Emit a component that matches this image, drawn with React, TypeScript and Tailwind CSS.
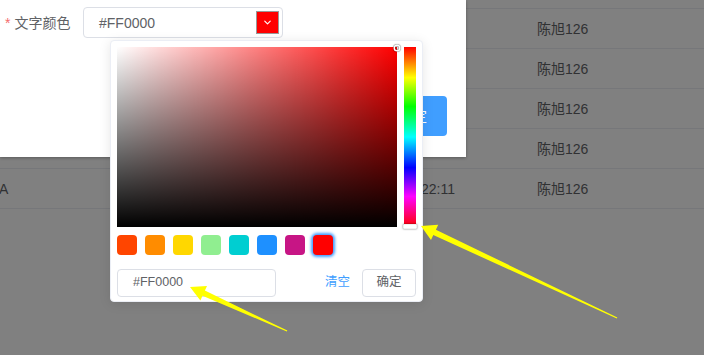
import { ChevronDown } from "lucide-react";

const rows = [0, 1, 2, 3, 4];
const swatches = ["#ff4500", "#ff8c00", "#ffd700", "#90ee90", "#00ced1", "#1e90ff", "#c71585", "#ff0000"];

function Arrows() {
  return (
    <svg className="pointer-events-none absolute left-0 top-0" width="704" height="355" viewBox="0 0 704 355">
      <polygon
        points="190,287 207,285.9 204.9,290.6 287.3,330.6 286.8,331.4 202.5,295.8 200.4,300.5"
        fill="#ffff00"
      />
      <polygon
        points="421,226 438.2,224.7 435.9,229.7 617.3,317.6 616.8,318.4 433.3,235.1 431,240.1"
        fill="#ffff00"
      />
    </svg>
  );
}

function ColorDropdown() {
  return (
    <div className="absolute left-[110px] top-[40px] h-[262px] w-[313px] rounded-[4px] border border-[#ebeef5] bg-white p-[6px] shadow-[0_2px_12px_0_rgba(0,0,0,0.1)]">
      <div className="flex">
        <div className="relative h-[180px] w-[280px] bg-[#ff0000]">
          <div className="absolute inset-0 bg-[linear-gradient(to_right,#fff,rgba(255,255,255,0))]" />
          <div className="absolute inset-0 bg-[linear-gradient(to_top,#000,rgba(0,0,0,0))]" />
          <div className="absolute right-[-2px] top-[-1px] size-[4px] rounded-full shadow-[0_0_0_1.5px_#fff,inset_0_0_1px_1px_rgba(0,0,0,0.3),0_0_1px_2px_rgba(0,0,0,0.4)]" />
        </div>
        <div className="relative ml-[7px] h-[180px] w-[12px] bg-[linear-gradient(to_bottom,#f00_0%,#ff0_17%,#0f0_33%,#0ff_50%,#00f_67%,#f0f_83%,#f00_100%)]">
          <div className="absolute left-[-1px] top-[177px] h-[5px] w-[14px] rounded-[1px] border border-[#f0f0f0] bg-white shadow-[0_0_2px_rgba(0,0,0,0.6)]" />
        </div>
      </div>
      <div className="mt-[8px] flex gap-[8px]">
        {swatches.map((c, i) => (
          <div
            key={c}
            className={`size-[20px] rounded-[4px] ${i === swatches.length - 1 ? "shadow-[0_0_3px_2px_#409eff]" : ""}`}
            style={{ backgroundColor: c }}
          />
        ))}
      </div>
      <div className="mt-[14px] flex items-center">
        <div className="flex h-[28px] w-[159px] items-center rounded-[4px] border border-[#dcdfe6] pl-[15px] text-[12.5px] text-[#606266]">
          #FF0000
        </div>
        <span className="ml-auto mr-[12px] text-[12.5px] text-[#409eff]">清空</span>
        <button className="h-[28px] w-[54px] rounded-[4px] border border-[#dcdfe6] bg-white text-[12.5px] text-[#606266]">
          确定
        </button>
      </div>
    </div>
  );
}

export default function App() {
  return (
    <div className="relative h-[355px] w-[704px] overflow-hidden bg-[#808080] font-['Liberation_Sans','Noto_Sans_CJK_SC',sans-serif] text-sm text-[#303133]">
      {/* table under the mask */}
      <div className="mt-[8px] border-t border-[#76777a]">
        {rows.map((r) => (
          <div key={r} className="flex h-[40px] items-center border-b border-[#76777a]">
            <span className="-ml-px w-[301px]">{r === 4 ? "A" : ""}</span>
            <span className="w-[155px] whitespace-nowrap text-right">{r === 4 ? ":22:11" : ""}</span>
            <span className="pl-[82px]">陈旭126</span>
          </div>
        ))}
      </div>

      {/* dialog */}
      <div className="absolute left-0 top-0 flex h-[157px] w-[466px] flex-col bg-white shadow-[0_1px_3px_rgba(0,0,0,0.3)]">
        <div className="flex items-center pl-[5px] pt-[7px]">
          <div className="flex w-[78px] items-center text-[#606266]">
            <span className="mr-[4px] text-[#f56c6c]">*</span>
            <span>文字颜色</span>
          </div>
          <div className="flex h-[31px] w-[200px] items-center rounded-[4px] border border-[#dcdfe6] pl-[15px] text-[#606266]">
            <span>#FF0000</span>
            <div className="ml-auto mr-[3px] flex size-[23px] items-center justify-center border border-[#999] bg-[#ff0000]">
              <ChevronDown size={11} color="#fff" strokeWidth={2.5} />
            </div>
          </div>
        </div>
        <div className="mt-[58px] flex justify-end pr-[19px]">
          <button className="h-[40px] rounded-[4px] bg-[#409eff] px-5 text-sm text-white">确定</button>
        </div>
      </div>

      <ColorDropdown />
      <Arrows />
    </div>
  );
}
